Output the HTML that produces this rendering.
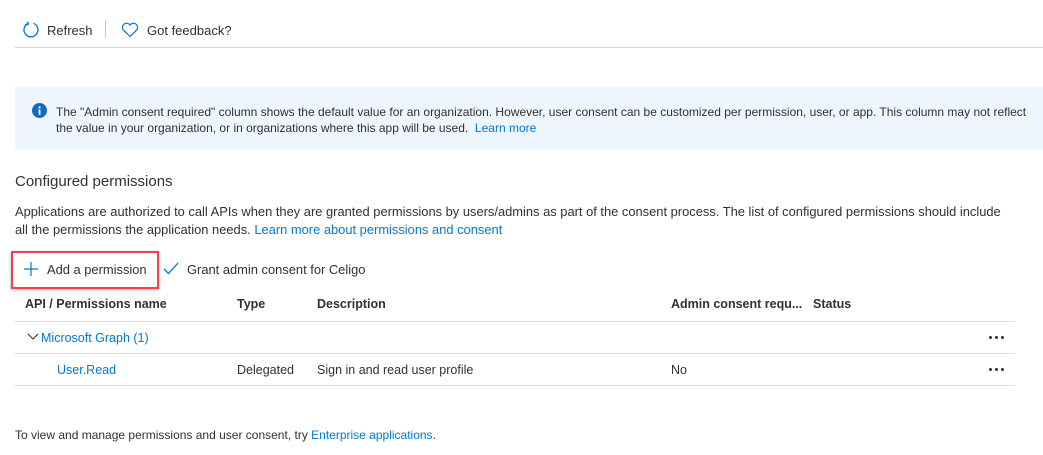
<!DOCTYPE html>
<html><head><style>
body{margin:0;width:1043px;height:455px;background:#fff;font-family:"Liberation Sans",sans-serif;color:#323130;font-size:12.9px;position:relative;overflow:hidden}
.a{position:absolute;white-space:nowrap}
a,.l{color:#0078d4;text-decoration:none}
.hr{position:absolute;height:1px;background:#d6d6d6}
.d{position:absolute;width:3px;height:3px;border-radius:50%;background:#323130}
.h{font-weight:bold;font-size:12.5px}
</style></head><body>
<svg class="a" style="left:22px;top:21px" width="18" height="18" viewBox="0 0 18 18"><path d="M6 2.5A7 7 0 1 0 11.5 2.3" fill="none" stroke="#0078d4" stroke-width="1.3"/><path d="M6 0.5v3h-3" fill="none" stroke="#0078d4" stroke-width="1.3"/></svg>
<div class="a" style="left:47px;top:23px;font-size:13px">Refresh</div>
<div class="a" style="left:105px;top:20px;width:1px;height:18px;background:#c8c6c4"></div>
<svg class="a" style="left:121px;top:22px" width="18" height="16" viewBox="0 0 18 16"><path d="M9 14.5L2.2 7.8A3.9 3.9 0 0 1 9 3a3.9 3.9 0 0 1 6.8 4.8z" fill="none" stroke="#0078d4" stroke-width="1.2"/></svg>
<div class="a" style="left:147px;top:23px;font-size:13px">Got feedback?</div>
<div class="hr" style="left:15px;top:47px;width:1028px"></div>
<div class="a" style="left:15px;top:87px;width:1028px;height:63px;background:#eef5fd"></div>
<svg class="a" style="left:32px;top:103px" width="15" height="15" viewBox="0 0 16 16"><circle cx="8" cy="8" r="8" fill="#0f6cbd"/><rect x="7" y="7" width="2" height="5.5" fill="#fff"/><circle cx="8" cy="4.7" r="1.2" fill="#fff"/></svg>
<div class="a" style="left:56px;top:104px;font-size:12px;line-height:16px">The "Admin consent required" column shows the default value for an organization. However, user consent can be customized per permission, user, or app. This column may not reflect<br>the value in your organization, or in organizations where this app will be used. &nbsp;<span class="l">Learn more</span></div>
<div class="a" style="left:15px;top:173px;font-size:15px">Configured permissions</div>
<div class="a" style="left:15px;top:203px;line-height:18px">Applications are authorized to call APIs when they are granted permissions by users/admins as part of the consent process. The list of configured permissions should include<br>all the permissions the application needs. <span class="l">Learn more about permissions and consent</span></div>
<div class="a" style="left:11px;top:251px;width:148px;height:38px;border:2px solid #f0424c;box-sizing:border-box;box-shadow:0 1px 3px rgba(0,0,0,.3)"></div>
<svg class="a" style="left:24px;top:262px" width="14" height="14" viewBox="0 0 14 14"><path d="M7 0v14M0 7h14" stroke="#0078d4" stroke-width="1.2"/></svg>
<div class="a" style="left:47px;top:262px">Add a permission</div>
<svg class="a" style="left:163px;top:262px" width="16" height="13" viewBox="0 0 16 13"><path d="M1 7l4.5 4.5L15 1" fill="none" stroke="#0078d4" stroke-width="1.3"/></svg>
<div class="a" style="left:187px;top:262px">Grant admin consent for Celigo</div>
<div class="a h" style="left:25px;top:297px">API / Permissions name</div>
<div class="a h" style="left:237px;top:297px">Type</div>
<div class="a h" style="left:317px;top:297px">Description</div>
<div class="a h" style="left:671px;top:297px">Admin consent requ...</div>
<div class="a h" style="left:813px;top:297px">Status</div>
<div class="hr" style="left:15px;top:321px;width:1000px;background:#e1dfdd"></div>
<svg class="a" style="left:27px;top:333px" width="12" height="8" viewBox="0 0 12 8"><path d="M1 1l5 5 5-5" fill="none" stroke="#323130" stroke-width="1.1"/></svg>
<div class="a l" style="left:41px;top:331px;font-size:12.5px">Microsoft Graph (1)</div>
<div class="d" style="left:989px;top:336px"></div><div class="d" style="left:995px;top:336px"></div><div class="d" style="left:1001px;top:336px"></div>
<div class="hr" style="left:15px;top:353px;width:1000px;background:#e1dfdd"></div>
<div class="a l" style="left:57px;top:363px;font-size:12.5px">User.Read</div>
<div class="a" style="left:237px;top:363px;font-size:12.5px">Delegated</div>
<div class="a" style="left:317px;top:363px;font-size:12.5px">Sign in and read user profile</div>
<div class="a" style="left:671px;top:363px;font-size:12.5px">No</div>
<div class="d" style="left:989px;top:368px"></div><div class="d" style="left:995px;top:368px"></div><div class="d" style="left:1001px;top:368px"></div>
<div class="hr" style="left:15px;top:385px;width:1000px;background:#e1dfdd"></div>
<div class="a" style="left:15px;top:428px;font-size:12px">To view and manage permissions and user consent, try <span class="l">Enterprise applications</span>.</div>
</body></html>
